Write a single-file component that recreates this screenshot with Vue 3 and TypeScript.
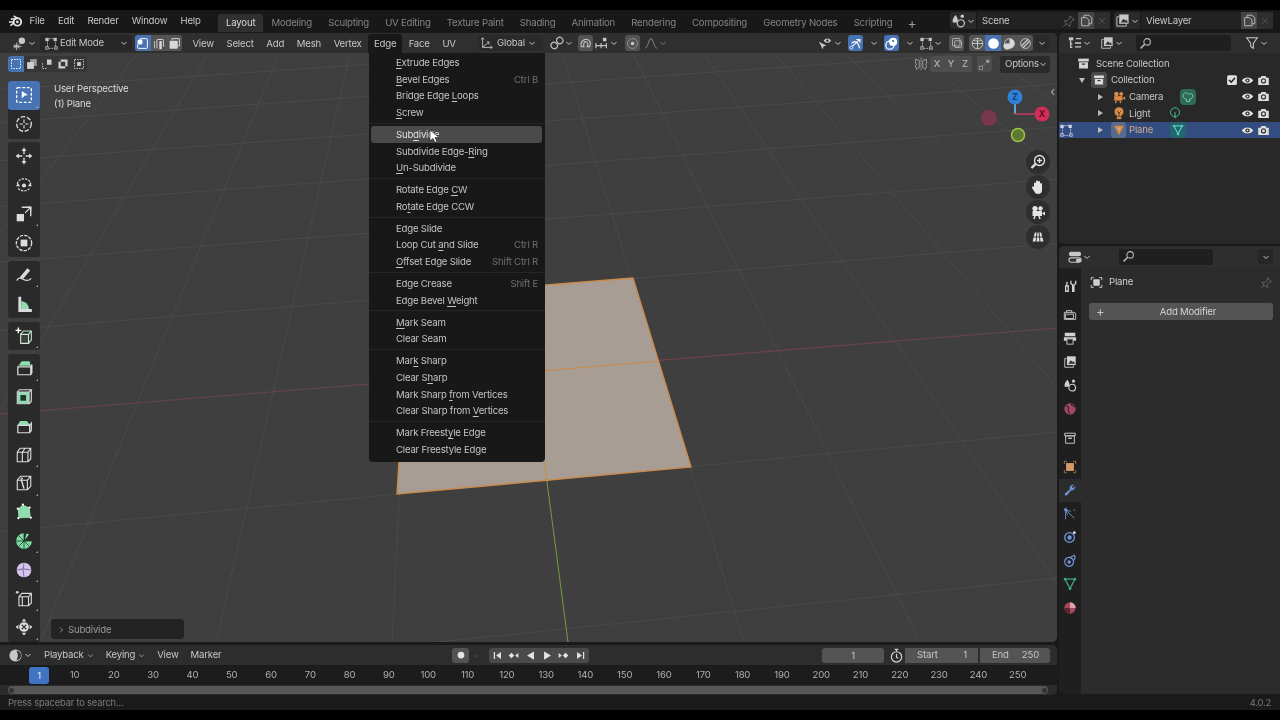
<script setup lang="ts">
import { h } from "vue";

// all icons live on a 16x16 grid
const icons: Record<string, string> = {
  blender: '<circle cx="10" cy="9.5" r="4" stroke-width="2"/><circle cx="10" cy="9.5" r="1.4" fill="currentColor" stroke="none"/><path d="M1 9.5h5M3 6.5h6M6 3l4 2.6M2.5 13.5l4-3" stroke-width="1.6"/>',
  chev: '<path d="M3 6l5 5 5-5" stroke-width="2"/>',
  view3d: '<path d="M1 11h9M5 7v8M2 9l6 4M8 9l-6 4"/><circle cx="10.5" cy="5" r="3.4" fill="currentColor" stroke="none"/>',
  editmode: '<path d="M3 4v8M5 14h7M13 6v6M5 2h5" stroke-dasharray="2 1"/><rect x="1" y="1.5" width="3" height="3" fill="currentColor"/><rect x="1" y="12" width="3" height="3"/><rect x="12" y="12" width="3" height="3"/><rect x="10.5" y="1" width="4" height="4" fill="currentColor" stroke="none"/>',
  selVert: '<path d="M5 2h8a1 1 0 0 1 1 1v10a1 1 0 0 1-1 1H3a1 1 0 0 1-1-1v-4" stroke-width="1.2"/><circle cx="5" cy="6" r="3.2" fill="currentColor" stroke="none"/>',
  selEdge: '<path d="M6 14V4a1 1 0 0 1 1-1h6a1 1 0 0 1 1 1v8" stroke-width="1.2"/><rect x="9" y="5" width="3" height="10" fill="currentColor" stroke="none"/><path d="M3 14V5"/>',
  selFace: '<path d="M5 4V2h9v9h-2" stroke-width="1.2"/><rect x="2" y="4.5" width="10" height="10" rx="1" fill="currentColor" stroke="none"/>',
  boxSet: '<rect x="2" y="2" width="12" height="12" stroke-dasharray="2 1.5" stroke-width="1.2"/>',
  boxAdd: '<rect x="5.5" y="1.5" width="9" height="9" fill="#999" stroke="none"/><rect x="1.5" y="5.5" width="9" height="9" fill="currentColor" stroke="none"/>',
  boxSub: '<rect x="8" y="2" width="6" height="7" fill="currentColor" stroke="none"/><path d="M2 7v7h7" stroke-dasharray="2 1.5" stroke-width="1.2"/>',
  boxDiff: '<path d="M5 2h9v9H11V5H5zM2 5h3v6h6v3H2z" fill="currentColor" stroke="none"/>',
  boxAnd: '<rect x="5.5" y="5.5" width="5" height="5" fill="currentColor" stroke="none"/><rect x="2" y="2" width="12" height="12" stroke-dasharray="2 1.5" stroke-width="1.2"/>',
  orient: '<path d="M3 2v11h11M3 13l7-6"/><path d="M1.5 4L3 2l1.5 2M12 11.5l2 1.5-2 1.5M8 6.5l2.5.5-.5 2.5"/>',
  link: '<rect x="1.5" y="7" width="7" height="7.5" rx="3.5" transform="rotate(-40 5 11)" stroke-width="1.3"/><rect x="7.5" y="1.5" width="7" height="7.5" rx="3.5" transform="rotate(-40 11 5)" stroke-width="1.3"/>',
  magnet: '<path d="M3 12C1 6 6 2 10 3s5 5 3 9h-3c2-3 1-5-1-6S5 7 6 12z" stroke-width="1.3"/>',
  snap: '<path d="M1 8v6M7 8v6M13 8v6M1 11h12" stroke-width="1.3"/><rect x="9" y="2" width="4" height="4" fill="currentColor" stroke="none"/>',
  prop: '<circle cx="8" cy="8" r="6" stroke-dasharray="2 1"/><circle cx="8" cy="8" r="2.2" fill="currentColor" stroke="none"/>',
  falloff: '<path d="M1 14c4 0 4-11 7-11s3 11 7 11" stroke-width="1.2"/>',
  visible: '<path d="M6 5c2-3 6-3 8 0-2 3-6 3-8 0z" fill="currentColor" stroke="none"/><circle cx="10" cy="5" r="1.2" fill="#222" stroke="none"/><path d="M1 6l4 8 1-3 3-1z" fill="currentColor" stroke="none"/>',
  gizmo: '<circle cx="3" cy="13" r="1.8"/><path d="M4 11.5L13 3M9 3h4.5v4.5M3 8c4-5 9-1 10 6" stroke-width="1.3"/>',
  overlay: '<circle cx="6" cy="10" r="5" stroke-width="1.5"/><circle cx="10" cy="6" r="5" fill="currentColor" stroke="none"/><circle cx="10" cy="5" r="1.4" fill="#4772b3" stroke="none"/>',
  xray: '<rect x="2" y="2" width="10" height="10" rx="1"/><rect x="5" y="5" width="9" height="9" rx="1"/>',
  wire: '<circle cx="8" cy="8" r="6.5"/><path d="M1.5 8h13M8 1.5v13M3 4c3 1.5 7 1.5 10 0"/>',
  solid: '<circle cx="8" cy="8" r="6.5" fill="currentColor" stroke="none"/>',
  material: '<circle cx="8" cy="8" r="6"/><path d="M8 2a6 6 0 0 1 0 12 4 4 0 0 1-6-6h6z" fill="currentColor" stroke="none"/>',
  render: '<circle cx="8" cy="8" r="6"/><path d="M3 11L11 3M5 13l8-8" stroke-width="1.5"/>',
  mirror: '<path d="M8 1v14" stroke-dasharray="2 1"/><path d="M6 4L2 2.5 1.5 7 3 8l-1.5 2L3 14l3-2zM10 4l4-1.5.5 4.5L13 8l1.5 2-1.5 4-3-2z"/>',
  merge: '<rect x="1.5" y="10" width="4" height="4"/><rect x="10" y="2" width="4" height="4" fill="currentColor" stroke="none"/><path d="M5 10l5-4" stroke-dasharray="2 1"/>',
  tree: '<rect x="1" y="1.5" width="5" height="3.5" fill="currentColor" stroke="none"/><path d="M3 5v8h2M3 9h2M8 8h7M8 12.5h7M9 3h6" stroke-width="1.5"/>',
  layer: '<rect x="4.5" y="1.5" width="10" height="10" fill="currentColor" stroke="none"/><path d="M6 10l3-4 2 2 1-1 2 3z" fill="#333" stroke="none"/><path d="M4 4H2v10h10v-2"/>',
  search: '<circle cx="10" cy="6" r="4" stroke-width="1.3"/><path d="M7 9l-5 5" stroke-width="1.8"/>',
  filter: '<path d="M2 2h12L9.5 8.5V14l-3-2V8.5z" stroke-width="1.2"/>',
  scene: '<path d="M5 2c2 3 3 5 1.5 8H2C1 7 3 4 5 2z" fill="currentColor" stroke="none"/><circle cx="12" cy="3.5" r="1.8" fill="currentColor" stroke="none"/><circle cx="10.5" cy="11" r="3.8" stroke-width="1.3"/>',
  pin: '<path d="M9 2l5 5-2 .5-3 3 .5 3L8 14 2.5 8.5 3 7.5l3 .5 3-3zM5 11l-3.5 3.5" stroke-width="1.1"/>',
  copy: '<path d="M5 4V1.5h6l3.5 3V12H11" stroke-width="1.2"/><path d="M2 4.5h6l3 3v7H2z" stroke-width="1.2"/>',
  close: '<path d="M3.5 3.5l9 9M12.5 3.5l-9 9" stroke-width="1.2"/>',
  box: '<rect x="1.5" y="2" width="13" height="3.5" fill="currentColor" stroke="none"/><path d="M2.5 6.5h11V14h-11z" fill="currentColor" stroke="none"/><rect x="6" y="8" width="4" height="1.5" fill="#333" stroke="none"/>',
  camera: '<circle cx="5" cy="4.5" r="2.6" fill="currentColor" stroke="none"/><circle cx="10.5" cy="4.5" r="2.2" fill="currentColor" stroke="none"/><rect x="2.5" y="7" width="9.5" height="5" fill="currentColor" stroke="none"/><path d="M12 9.5l3-2v4z" fill="currentColor" stroke="none"/><path d="M5 12l-1 3M9 12l1 3" stroke-width="1.5"/>',
  light: '<circle cx="8" cy="6.5" r="5.2" fill="currentColor" stroke="none"/><rect x="5.5" y="12" width="5" height="3" fill="currentColor" stroke="none"/><path d="M6 6l2 2 2-2M8 8v4" stroke="#333"/>',
  tri: '<path d="M2.5 3h11L8 14z" fill="currentColor" stroke="none"/><path d="M6 5h4L8 10z" fill="#b9a79b" stroke="none"/>',
  camData: '<path d="M2 4c3-3 5-1 6 0s5-2 6 1-1 6-4 6v3H6v-3C3 11 0 7 2 4z" stroke-width="1.2"/>',
  bulb: '<circle cx="8" cy="7" r="6" stroke-width="1.3"/><path d="M8 7v8" stroke-width="1.5"/>',
  meshData: '<path d="M2.5 2.5h11L8 13.5z" stroke-width="1.5"/><circle cx="2.5" cy="2.5" r="1.6" fill="currentColor" stroke="none"/><circle cx="13.5" cy="2.5" r="1.6" fill="currentColor" stroke="none"/><circle cx="8" cy="13.5" r="1.6" fill="currentColor" stroke="none"/>',
  eye: '<path d="M1 8c3-5 11-5 14 0-3 5-11 5-14 0z" fill="currentColor" stroke="none"/><circle cx="8" cy="8" r="2.6" fill="#222" stroke="none"/><circle cx="8" cy="8" r="1.2" fill="currentColor" stroke="none"/>',
  snapshot: '<path d="M1.5 4.5h3l1-2h5l1 2h3v9h-13z" fill="currentColor" stroke="none"/><circle cx="8" cy="8.5" r="3.2" fill="#333" stroke="none"/><circle cx="8" cy="8.5" r="1.8" fill="currentColor" stroke="none"/>',
  check: '<rect x="1.5" y="1.5" width="13" height="13" rx="2" fill="currentColor" stroke="none"/><path d="M4 8l3 3 5-6" stroke="#222" stroke-width="2"/>',
  select: '<rect x="1.5" y="1.5" width="13" height="13" rx="1" stroke-dasharray="2.5 1.5" stroke-width="1.2"/><path d="M6 4.5l5.5 3.5-3 .7L6 11z" fill="currentColor" stroke="none"/>',
  cursor: '<circle cx="8" cy="8" r="6.5" stroke-dasharray="4 1.5" stroke-width="1.2"/><path d="M8 4v3M8 9v3M4 8h3M9 8h3"/>',
  move: '<path d="M8 3.5v3M8 9.5v3M3.5 8h3M9.5 8h3" stroke-width="1.2"/><path d="M8 .5l2.2 3H5.8zM8 15.5l-2.2-3h4.4zM.5 8l3-2.2v4.4zM15.5 8l-3 2.2V5.8z" fill="currentColor" stroke="none"/>',
  rotate: '<path d="M2 7c1-6 11-6 12 0M3 11c2 3 8 3 10 0" stroke-dasharray="2 1"/><circle cx="8" cy="8.5" r="1.8" fill="currentColor" stroke="none"/><path d="M1 9l1.5-3L4.5 9zM11.5 9l2-3L15 9z" fill="currentColor" stroke="none"/>',
  scale: '<path d="M6 2h8v8" stroke-width="1.2"/><rect x="1.5" y="8" width="6.5" height="6.5" fill="currentColor" stroke="none"/><path d="M9 7l5-5M10.5 2H14v3.5"/>',
  transform: '<circle cx="8" cy="8" r="6.8" stroke-dasharray="3 1" stroke-width="1.2"/><rect x="5" y="5" width="6" height="6" fill="currentColor" stroke="none"/>',
  annotate: '<path d="M1.5 13c2-4 4-2 6-1s5 1 7-1" stroke-width="1"/><path d="M5 9l6-7 2.5 2-6 7-3 .5z" fill="currentColor" stroke="none"/>',
  measure: '<path d="M5.5 5.5a7 7 0 0 1 7 7h-7z" fill="#8fdcae" stroke="none"/><path d="M3 1.5h2.5V12.5H15V15H3z" fill="currentColor" stroke="none"/>',
  addCube: '<path d="M5 6.5h7v8H5z" fill="#33443a"/><path d="M5 6.5l2.5-3h7v8l-2.5 3M12 6.5l2.5-3" stroke="#b8e6cc"/><path d="M3 .5v5M.5 3h5" stroke-width="1.3" stroke="#fff"/>',
  extrude: '<path d="M3 6l3-4h7l1 4z" fill="#8fdcae" stroke="none"/><path d="M2.5 7h11.5v7H2.5zM14 7l1-2v7l-1 2" stroke-width="1.1"/>',
  inset: '<path d="M2 3.5h10.5V14H2z" fill="#8fdcae" stroke="#ccc"/><rect x="4.8" y="6.3" width="5" height="5" fill="#1c3528" stroke="none"/><path d="M12.5 3.5l2-2H4l-2 2M12.5 14l2-2V1.5"/>',
  bevel: '<path d="M2.5 7l2-3.5h6L13.5 7z" fill="#8fdcae" stroke="none"/><path d="M2.5 7.5h10.5V14H2.5zM13 7.5l1.5-2V12L13 14" stroke-width="1.1"/>',
  loop: '<path d="M2 5.5L4.5 2H14v9.5L11.5 14H2zM6.5 5.5L9 2M6.5 5.5V14M11.5 5.5L14 2M2 5.5h9.5V14"/>',
  knife: '<path d="M2 5.5L5 2h9v9l-3 3H2zM2 5.5h9V14M11 5.5L14 2"/><path d="M5.5 5l2.5 8" stroke-width="1.3"/><circle cx="6" cy="4" r="1" fill="currentColor" stroke="none"/>',
  polybuild: '<path d="M2.5 5L7 1.5 13 4l1 9-11 .5z" fill="#8fdcae" stroke="none"/><circle cx="2.5" cy="5" r="1" fill="#fff" stroke="none"/><circle cx="7" cy="1.5" r="1" fill="#fff" stroke="none"/><circle cx="13" cy="4" r="1" fill="#fff" stroke="none"/><circle cx="14" cy="13" r="1" fill="#fff" stroke="none"/><circle cx="3" cy="13.5" r="1" fill="#fff" stroke="none"/>',
  spin: '<path d="M8 8V1A7 7 0 1 0 15 8z" fill="#7fdca2" stroke="none"/><path d="M8.8 7L10 1.3a7 7 0 0 1 2.5 1z" fill="#7fdca2" stroke="none"/><path d="M8 1v14M1 8h14M3 3l5 5M3 13l5-5M13 13L8 8" stroke="#1c3528" stroke-width=".7"/>',
  smooth: '<circle cx="8" cy="8" r="6.5" fill="#d6c4ee" stroke="none"/><path d="M1.5 8c4-1 9-1 13 0M8 1.5c-1 4-1 9 0 13" stroke="#8a78a8"/>',
  shear: '<path d="M3.5 6L6 3h8.5v8.5L12 14H3.5zM3.5 6H12v8M12 6l2.5-3M6.5 6v8"/><circle cx="2" cy="2" r="1.2" fill="currentColor" stroke="none"/>',
  shrink: '<path d="M8 .5l2 2.5H6zM8 15.5L6 13h4zM.5 8L3 6v4zM15.5 8L13 10V6z" fill="currentColor" stroke="none"/><circle cx="8" cy="8" r="4.3" fill="currentColor" stroke="none"/><path d="M6 6l4 4M10 6l-4 4" stroke="#333"/>',
  zoom: '<circle cx="9.5" cy="6.5" r="5" stroke-width="1.3"/><path d="M5.5 10L1.5 14" stroke-width="2.4"/><path d="M7 6.5h5M9.5 4v5" stroke-width="1.3"/>',
  hand: '<path d="M4 8V4.5a1 1 0 0 1 2 0V8 2.5a1 1 0 0 1 2 0V8 3a1 1 0 0 1 2 0v5.5V5a1 1 0 0 1 2 0v6c0 3-2 4-4 4s-3-1-4-3L2 9c-.5-1 1-2 2-1z" fill="currentColor" stroke="none"/>',
  persp: '<path d="M4.5 3h7L14 13H2zM3.3 8h9.4M7 3l-1 10M9 3l1 10" fill="currentColor" stroke="#333"/>',
  timeline: '<circle cx="8" cy="8" r="6.5" fill="currentColor" stroke="none"/><path d="M9 3a5 5 0 0 1 0 10c2-3 2-7 0-10z" fill="#333" stroke="none"/>',
  record: '<circle cx="8" cy="8" r="4.5" fill="currentColor" stroke="none"/>',
  jumpStart: '<path d="M3.5 3v10" stroke-width="1.8"/><path d="M13 3L6 8l7 5z" fill="currentColor" stroke="none"/>',
  keyPrev: '<path d="M5 4l4 4-4 4-4-4z" fill="currentColor" stroke="none"/><path d="M15 4.5L10.5 8l4.5 3.5z" fill="currentColor" stroke="none"/>',
  playBack: '<path d="M13 2L3 8l10 6z" fill="currentColor" stroke="none"/>',
  play: '<path d="M3 2l10 6-10 6z" fill="currentColor" stroke="none"/>',
  keyNext: '<path d="M11 4L7 8l4 4 4-4z" fill="currentColor" stroke="none"/><path d="M1 4.5L5.5 8 1 11.5z" fill="currentColor" stroke="none"/>',
  jumpEnd: '<path d="M12.5 3v10" stroke-width="1.8"/><path d="M3 3l7 5-7 5z" fill="currentColor" stroke="none"/>',
  clock: '<circle cx="8" cy="9.5" r="5.5" stroke-width="1.3"/><path d="M8 6v4l2 1M6 1.5h4M8 1.5V4" stroke-width="1.2"/>',
  toggles: '<rect x="1" y="2" width="14" height="5" rx="2.5" fill="currentColor" stroke="none"/><rect x="1" y="9" width="14" height="5" rx="2.5" stroke-width="1.2"/><rect x="9" y="10" width="6" height="4" rx="2" fill="currentColor" stroke="none"/>',
  objectData: '<path d="M1.5 5V2h3M11.5 2h3v3M1.5 11v3h3M11.5 14h3v-3" stroke-width="1.2"/><rect x="4" y="4" width="8" height="8" rx="1" fill="currentColor" stroke="none"/>',
  tool: '<path d="M3 8h3v6H3zM4.5 3v4" stroke-width="1.5"/><path d="M9 2v3l2 2v7h1.5V7l2-2V2" stroke-width="1.5"/>',
  pRender: '<path d="M1.5 5h11l2 1v7h-13zM4 5V3h6v2"/><rect x="3" y="7" width="9" height="5"/>',
  pOutput: '<path d="M2 2h12v4H2z" fill="currentColor" stroke="none"/><path d="M1 7h14v4H1z" fill="currentColor" stroke="none"/><rect x="4.5" y="9" width="7" height="6" fill="#1f1f1f" stroke="currentColor"/>',
  pWorld: '<circle cx="8" cy="8" r="6.5" fill="#a04a62" stroke="none"/><path d="M3 5c3-1 4 1 3 3s2 3 1 6M9 2c1 3 4 2 5 4" stroke="#3a2028" stroke-width="1.2"/>',
  pCollection: '<path d="M2 2.5h12v3H2zM3 5.5h10V14H3z"/><rect x="6" y="7.5" width="4" height="1.5" fill="currentColor" stroke="none"/>',
  pObject: '<path d="M1.5 4.5v-3h3M11.5 1.5h3v3M1.5 11.5v3h3M11.5 14.5h3v-3" stroke="#b07840"/><rect x="3.5" y="3.5" width="9" height="9" fill="#d29a68" stroke="none"/>',
  wrench: '<path d="M2 13c0-2 4-4 6-6-1-3 1-5 4.5-5L10 4.5 11.5 6 14 3.500c.5 3-2 5.5-5 5-2 2-4 6-6 6z" fill="currentColor" stroke="none"/>',
  pParticle: '<circle cx="3" cy="3" r="1.8" fill="currentColor" stroke="none"/><path d="M3 3v11M3 3l10 10M3 3l6 2M3 3l2 6M12 3.5h2"/>',
  pPhysics: '<circle cx="7.5" cy="8.5" r="5.5" stroke-width="1.5"/><circle cx="7.5" cy="8.5" r="2.5" fill="currentColor" stroke="none"/><circle cx="13" cy="3" r="1.6" fill="#ddd" stroke="none"/>',
  pConstraint: '<ellipse cx="7" cy="9" rx="5" ry="5" stroke-width="1.5" transform="rotate(30 7 9)"/><circle cx="7" cy="9" r="2" fill="currentColor" stroke="none"/><path d="M8 4l5-2.5c1.5 2 0 5-1.5 6.5" stroke-width="1.4"/>',
  pMaterial: '<circle cx="8" cy="8" r="6.5" fill="#a8485c" stroke="none"/><path d="M8 1.5a6.5 6.5 0 0 1 6.5 6.5H8z" fill="#e0a0a8" stroke="none"/><path d="M8 8H1.5A6.5 6.5 0 0 0 8 14.5z" fill="#5c2430" stroke="none"/>',
};

const Ico = (props: { n: string; s?: number }) =>
  h("svg", {
    viewBox: "0 0 16 16",
    width: props.s ?? 14,
    height: props.s ?? 14,
    class: "ic",
    innerHTML: icons[props.n],
  });

const fileMenus = ["File", "Edit", "Render", "Window", "Help"];
const workspaces = ["Layout", "Modeling", "Sculpting", "UV Editing", "Texture Paint", "Shading", "Animation", "Rendering", "Compositing", "Geometry Nodes", "Scripting"];
const viewMenus = ["View", "Select", "Add", "Mesh", "Vertex", "Edge", "Face", "UV"];

// text is split around the mnemonic letter: [before, letter, after, shortcut]
type Item = [string, string, string, string?];
const menuGroups: Item[][] = [
  [["", "E", "xtrude Edges"], ["", "B", "evel Edges", "Ctrl B"], ["Bridge Edge ", "L", "oops"], ["", "S", "crew"]],
  [["Sub", "d", "ivide"], ["Subdivide Edge-", "R", "ing"], ["", "U", "n-Subdivide"]],
  [["Rotate Edge ", "C", "W"], ["Ro", "t", "ate Edge CCW"]],
  [["Edge Slide", "", ""], ["Loop Cut ", "a", "nd Slide", "Ctrl R"], ["", "O", "ffset Edge Slide", "Shift Ctrl R"]],
  [["Edge Crease", "", "", "Shift E"], ["Edge Bevel ", "W", "eight"]],
  [["", "M", "ark Seam"], ["Clear Seam", "", ""]],
  [["Mar", "k", " Sharp"], ["Clear S", "h", "arp"], ["Mark Sharp ", "f", "rom Vertices"], ["Clear Sharp from ", "V", "ertices"]],
  [["Mark Freest", "y", "le Edge"], ["Clear Freestyle Edge", "", ""]],
];

const selectOps = ["boxSet", "boxAdd", "boxSub", "boxDiff", "boxAnd"];
const toolGroups: string[][] = [
  ["select", "cursor"],
  ["move", "rotate", "scale", "transform"],
  ["annotate", "measure"],
  ["addCube"],
  ["extrude", "inset", "bevel", "loop", "knife", "polybuild", "spin", "smooth", "shear", "shrink"],
];
const cornerMark = new Set(["select", "scale", "annotate", "addCube", "extrude", "loop", "knife", "spin", "smooth", "shear", "shrink"]);

const navIcons = ["zoom", "hand", "camera", "persp"];
const propTabs = ["tool", "pRender", "pOutput", "layer", "scene", "pWorld", "pCollection", "pObject", "wrench", "pParticle", "pPhysics", "pConstraint", "meshData", "pMaterial"];
const tabGapBefore = new Set(["pRender", "pCollection", "pObject"]);
const tabColor: Record<string, string> = { wrench: "blue", pParticle: "blue", pPhysics: "blue", pConstraint: "blue", meshData: "green" };

const outliner = [
  { name: "Camera", icon: "camera", badge: "camData", badgeBox: "b-cam" },
  { name: "Light", icon: "light", badge: "bulb", badgeBox: "b-light" },
  { name: "Plane", icon: "tri", badge: "meshData", badgeBox: "b-mesh" },
];

const frames = Array.from({ length: 25 }, (_, i) => (i + 1) * 10);

// viewport floor, worked out from the plane corners (screen coordinates)
const VP = { x: 440, y: -343 };
const depthLines = Array.from({ length: 40 }, (_, i) => {
  const x0 = 547 + (i - 18) * 147;
  return { x1: VP.x, y1: VP.y, x2: VP.x + (x0 - VP.x) * (985 / 823), y2: 642 };
});
const crossLines = [-1, 0, 2, 3, 4, 5, 6, 7].map((n) => {
  const y = 1 / (0.001215 + n * 0.000188) - 343;
  const slope = 0.0875 + (y - 370) * 0.00006;
  return { y1: y + 547 * slope, y2: y - 510 * slope };
});
</script>

<template>
  <div class="app">
    <header class="topbar">
      <Ico n="blender" :s="15" class="logo" />
      <nav class="filemenu">
        <span v-for="m in fileMenus" :key="m">{{ m }}</span>
      </nav>
      <nav class="tabs">
        <span v-for="(w, i) in workspaces" :key="w" class="tab" :class="{ on: i === 0 }">{{ w }}</span>
        <span class="plus">+</span>
      </nav>
      <div class="scene-group">
        <div class="picker"><Ico n="scene" :s="15" /><Ico n="chev" :s="8" /></div>
        <div class="name-field scene-field">
          <span>Scene</span>
          <Ico n="pin" :s="14" class="pin" />
        </div>
        <div class="mini lit"><Ico n="copy" :s="13" /></div>
        <div class="mini"><Ico n="close" :s="10" /></div>
      </div>
      <div class="scene-group layer-group">
        <div class="picker"><Ico n="layer" :s="15" /><Ico n="chev" :s="8" /></div>
        <div class="name-field layer-field"><span>ViewLayer</span></div>
        <div class="mini lit"><Ico n="copy" :s="13" /></div>
        <div class="mini"><Ico n="close" :s="10" /></div>
      </div>
    </header>

    <main class="workspace">
      <div class="left-col">
        <section class="viewport">
          <svg class="scene3d" viewBox="0 33 1057 609" width="1057" height="609">
            <line v-for="(l, i) in depthLines" :key="'d' + i" v-bind="l" class="grid" />
            <line v-for="(l, i) in crossLines" :key="'c' + i" x1="0" :y1="l.y1" x2="1057" :y2="l.y2" class="grid" />
            <line x1="0" y1="414" x2="1057" y2="328" class="axis-x" />
            <line x1="568" y1="642" x2="547" y2="482" class="axis-y" />
            <polygon points="633,278 691,467 397,494 409,296" class="face" />
            <polyline points="633,278 691,467 397,494 409,296 633,278" class="edge" />
            <line x1="658" y1="361" x2="404" y2="383" class="edge thin" />
            <line x1="547" y1="482" x2="520" y2="287" class="edge thin" />
            <!-- orientation gizmo -->
            <line x1="1015" y1="97" x2="1015" y2="114" class="gz-z" />
            <line x1="1015" y1="114" x2="1042" y2="114" class="gz-x" />
            <circle cx="989" cy="118" r="7" class="gz-nx" />
            <circle cx="1018" cy="135" r="6.5" class="gz-ny" />
            <circle cx="1015" cy="97" r="7.5" fill="#2f80d8" />
            <circle cx="1042" cy="114" r="7.5" fill="#d12f58" />
            <text x="1015" y="100" class="gz-t blue-t">Z</text>
            <text x="1042" y="117" class="gz-t red-t">X</text>
          </svg>

          <div class="vp-header">
            <div class="picker vp-type"><Ico n="view3d" :s="15" /><Ico n="chev" :s="8" /></div>
            <div class="mode"><Ico n="editmode" :s="13" /><span>Edit Mode</span><Ico n="chev" :s="8" class="push" /></div>
            <div class="seg modes">
              <span class="on"><Ico n="selVert" :s="13" /></span>
              <span><Ico n="selEdge" :s="13" /></span>
              <span><Ico n="selFace" :s="13" /></span>
            </div>
            <nav class="viewmenu">
              <span v-for="m in viewMenus" :key="m" :class="{ open: m === 'Edge' }">{{ m }}</span>
            </nav>
            <div class="orient"><Ico n="orient" :s="14" /><span>Global</span><Ico n="chev" :s="8" class="push" /></div>
            <div class="picker pivot"><Ico n="link" :s="14" /><Ico n="chev" :s="8" /></div>
            <span class="tbtn snapbtn"><Ico n="magnet" :s="13" /></span>
            <div class="picker snapper"><Ico n="snap" :s="14" /><Ico n="chev" :s="8" /></div>
            <span class="tbtn propbtn"><Ico n="prop" :s="13" /></span>
            <div class="picker dim falloff"><Ico n="falloff" :s="14" /><Ico n="chev" :s="8" /></div>

            <div class="hd-right">
              <div class="picker vis"><Ico n="visible" :s="15" /><Ico n="chev" :s="8" /></div>
              <span class="tbtn blue-btn gizmo"><Ico n="gizmo" :s="13" /></span>
              <Ico n="chev" :s="8" class="solo" />
              <span class="tbtn blue-btn over"><Ico n="overlay" :s="13" /></span>
              <Ico n="chev" :s="8" class="solo" />
              <div class="picker edit-ov"><Ico n="editmode" :s="13" /><Ico n="chev" :s="8" /></div>
              <span class="tbtn xray"><Ico n="xray" :s="12" /></span>
              <div class="seg shade">
                <span><Ico n="wire" :s="13" /></span>
                <span class="on"><Ico n="solid" :s="13" /></span>
                <span><Ico n="material" :s="13" /></span>
                <span><Ico n="render" :s="13" /></span>
              </div>
              <span class="shade-more"><Ico n="chev" :s="8" /></span>
            </div>
          </div>

          <div class="tool-row">
            <div class="seg sel-modes">
              <span v-for="(op, i) in selectOps" :key="op" :class="{ on: i === 0 }"><Ico :n="op" :s="12" /></span>
            </div>
            <div class="tool-right">
              <Ico n="mirror" :s="14" class="mirror" />
              <div class="axis-chips"><span>X</span><span>Y</span><span>Z</span></div>
              <span class="tbtn merge"><Ico n="merge" :s="13" /></span>
              <div class="options"><span>Options</span><Ico n="chev" :s="8" /></div>
            </div>
          </div>

          <div class="vp-body">
            <aside class="toolbar">
              <div v-for="(g, gi) in toolGroups" :key="gi" class="tool-group" :class="{ grow: gi === 4 }">
                <div v-for="t in g" :key="t" class="tool" :class="{ on: t === 'select' }">
                  <Ico :n="t" :s="18" />
                  <i v-if="cornerMark.has(t)" class="corner"></i>
                </div>
              </div>
            </aside>
            <div class="vp-info">
              <div class="vp-text">User Perspective<br />(1) Plane</div>
              <div class="redo"><Ico n="chev" :s="8" class="redo-chev" /><span>Subdivide</span></div>
            </div>
          </div>

          <div class="nav-btns">
            <span v-for="n in navIcons" :key="n" class="nav-btn"><Ico :n="n" :s="16" /></span>
          </div>
          <span class="side-arrow">‹</span>

          <div class="edge-menu">
            <template v-for="(g, gi) in menuGroups" :key="gi">
              <div v-if="gi > 0" class="sep"></div>
              <div v-for="it in g" :key="it[0] + it[1]" class="item" :class="{ hot: it[0] === 'Sub' }">
                <span>{{ it[0] }}<u>{{ it[1] }}</u>{{ it[2] }}</span>
                <span v-if="it[3]" class="short">{{ it[3] }}</span>
              </div>
            </template>
          </div>
          <svg class="pointer" width="11" height="15" viewBox="0 0 11 15">
            <path d="M1 1v11l3-2.5 2 4 2-1-2-4h4z" fill="#fff" stroke="#222" stroke-width=".7" />
          </svg>
        </section>

        <section class="timeline">
          <div class="tl-header">
            <div class="picker tl-type"><Ico n="timeline" :s="15" /><Ico n="chev" :s="8" /></div>
            <div class="tl-menus">
              <span>Playback<Ico n="chev" :s="7" class="m-chev" /></span>
              <span>Keying<Ico n="chev" :s="7" class="m-chev" /></span>
              <span>View</span>
              <span>Marker</span>
            </div>
            <span class="tbtn rec"><Ico n="record" :s="12" /></span>
            <Ico n="chev" :s="7" class="rec-chev" />
            <div class="transport">
              <Ico n="jumpStart" :s="11" />
              <Ico n="keyPrev" :s="11" />
              <Ico n="playBack" :s="11" />
              <Ico n="play" :s="11" />
              <Ico n="keyNext" :s="11" />
              <Ico n="jumpEnd" :s="11" />
            </div>
            <div class="frame-box">1</div>
            <Ico n="clock" :s="15" class="clock" />
            <div class="range r-start"><span>Start</span><span>1</span></div>
            <div class="range r-end"><span>End</span><span>250</span></div>
          </div>
          <div class="tl-scale">
            <span class="cur-frame">1</span>
            <span v-for="f in frames" :key="f" class="fr">{{ f }}</span>
          </div>
          <div class="tl-scroll"><div class="thumb"><i></i><i></i></div></div>
        </section>
      </div>

      <div class="right-col">
        <section class="outliner">
          <div class="out-header">
            <div class="picker"><Ico n="tree" :s="14" /><Ico n="chev" :s="8" /></div>
            <div class="picker out-mode"><Ico n="layer" :s="14" /><Ico n="chev" :s="8" /></div>
            <div class="searchbox"><Ico n="search" :s="13" /></div>
            <div class="picker out-filter"><Ico n="filter" :s="14" /><Ico n="chev" :s="8" /></div>
          </div>
          <div class="row lvl0">
            <Ico n="box" :s="13" class="r-ico" />
            <span>Scene Collection</span>
          </div>
          <div class="row lvl1">
            <i class="tri-down"></i>
            <span class="coll-ico"><Ico n="box" :s="12" /></span>
            <span>Collection</span>
            <span class="row-end"><Ico n="check" :s="12" /><Ico n="eye" :s="13" /><Ico n="snapshot" :s="13" /></span>
          </div>
          <div v-for="o in outliner" :key="o.name" class="row lvl2" :class="{ sel: o.name === 'Plane' }">
            <Ico v-if="o.name === 'Plane'" n="editmode" :s="13" class="row-mode" />
            <i class="tri-right"></i>
            <span class="obj-ico" :class="{ boxed: o.name === 'Plane' }"><Ico :n="o.icon" :s="14" /></span>
            <span class="obj-name">{{ o.name }}</span>
            <span class="badge" :class="o.badgeBox"><Ico :n="o.badge" :s="12" /></span>
            <span class="row-end"><Ico n="eye" :s="13" /><Ico n="snapshot" :s="13" /></span>
          </div>
        </section>

        <section class="properties">
          <div class="pr-header">
            <div class="picker"><Ico n="toggles" :s="14" /><Ico n="chev" :s="8" /></div>
            <div class="searchbox pr-search"><Ico n="search" :s="13" /></div>
            <span class="pr-more"><Ico n="chev" :s="8" /></span>
          </div>
          <div class="pr-body">
            <nav class="pr-tabs">
              <span
                v-for="t in propTabs"
                :key="t"
                class="pr-tab"
                :class="[tabColor[t], { on: t === 'wrench', gap: tabGapBefore.has(t) }]"
              ><Ico :n="t" :s="14" /></span>
            </nav>
            <div class="pr-panel">
              <div class="pr-title">
                <Ico n="objectData" :s="13" />
                <span>Plane</span>
                <Ico n="pin" :s="13" class="push dim-ico" />
              </div>
              <button class="add-mod"><span class="add-plus">+</span><span class="add-label">Add Modifier</span></button>
            </div>
          </div>
        </section>
      </div>
    </main>

    <footer class="status">
      <span>Press spacebar to search...</span>
      <span>4.0.2</span>
    </footer>
  </div>
</template>

<style>
html, body { margin: 0; background: #000; }
.ic { fill: none; stroke: currentColor; stroke-width: 1; flex: none; display: block; }
</style>

<style scoped>
.app {
  width: 1280px;
  height: 720px;
  box-sizing: border-box;
  padding: 10px 0;
  background: #000;
  display: flex;
  flex-direction: column;
  font: 9.6px/1 Inter, "Liberation Sans", sans-serif;
  letter-spacing: -0.2px;
  white-space: nowrap;
  color: #c6c6c6;
  overflow: hidden;
  filter: blur(0.35px);
}

/* top bar */
.topbar { height: 22px; flex: none; background: #181818; display: flex; position: relative; align-items: flex-start; }
.logo { margin: 3px 0 0 8px; color: #e6e6e6; }
.filemenu { display: flex; padding-top: 5px; }
.filemenu span { padding: 0 6.6px; line-height: 11px; }
.tabs { display: flex; position: absolute; left: 218px; top: 4px; height: 18px; align-items: center; color: #858585; }
.tab { padding: 0 8.1px; height: 18px; line-height: 17px; border-radius: 3px 3px 0 0; }
.tab.on { background: #303030; color: #d8d8d8; }
.plus { margin-left: 7px; font-size: 14px; color: #999; }
.scene-group { position: absolute; left: 950px; top: 2px; height: 17px; display: flex; align-items: center; }
.layer-group { left: 1114px; }
.picker { display: flex; align-items: center; gap: 1px; color: #c8c8c8; }
.scene-group .picker { width: 26px; height: 17px; background: #2a2a2a; border-radius: 3px 0 0 3px; justify-content: center; }
.name-field { height: 17px; background: #222; display: flex; align-items: center; padding: 1px 0 0 5px; box-sizing: border-box; color: #c8c8c8; }
.scene-field { width: 101px; margin-left: 1px; position: relative; }
.layer-field { width: 100px; margin-left: 1px; }
.pin { margin-left: auto; margin-right: 2px; color: #666; }
.mini { width: 16px; height: 17px; display: flex; align-items: center; justify-content: center; background: #2e2e2e; color: #5c5c5c; }
.mini.lit { background: #454545; color: #b8b8b8; }

.workspace { flex: 1; min-height: 0; display: flex; background: #1a1a1a; padding-top: 1px; }
.left-col { width: 1057px; flex: none; display: flex; flex-direction: column; }
.right-col { flex: 1; margin-left: 2px; display: flex; flex-direction: column; }

/* viewport */
.viewport {
  height: 609px;
  flex: none;
  background: #3f3f3f;
  border-radius: 0 5px 5px 0;
  position: relative;
  overflow: hidden;
  display: flex;
  flex-direction: column;
}
.scene3d { position: absolute; left: 0; top: 0; }
.grid { stroke: #4a4a4a; stroke-width: 1; }
.axis-x { stroke: #6d434c; stroke-width: 1.2; }
.axis-y { stroke: #6e9a35; stroke-width: 1; }
.face { fill: #a89d95; }
.edge { fill: none; stroke: #c98a4c; stroke-width: 1.4; }
.edge.thin { stroke-width: 1.1; }
.gz-z { stroke: #5fa8d8; stroke-width: 2; }
.gz-x { stroke: #a03a55; stroke-width: 2; }
.gz-nx { fill: #74394a; stroke: #8a344b; stroke-width: 1.5; }
.gz-ny { fill: #5f7a34; stroke: #9ac444; stroke-width: 1.5; }
.gz-t { font-size: 9px; font-weight: 700; text-anchor: middle; }
.blue-t { fill: #123c78; }
.red-t { fill: #5a0c22; }

.vp-header { height: 20px; flex: none; background: #2f2f2f; position: relative; display: flex; align-items: center; }
.vp-type { width: 21px; margin-left: 12px; }
.mode { width: 92px; height: 16px; box-sizing: border-box; margin-left: 7px; background: #272727; border-radius: 3px; display: flex; align-items: center; padding: 0 4px 0 5px; gap: 2px; }
.push { margin-left: auto; }
.seg { display: flex; background: #535353; border-radius: 3px; overflow: hidden; color: #d8d8d8; }
.seg span { height: 16px; display: flex; align-items: center; justify-content: center; }
.seg .on { background: #4772b3; color: #fff; }
.modes { margin-left: 3px; }
.modes span { width: 15.7px; }
.viewmenu { display: flex; margin-left: 4px; height: 19px; width: 292px; align-items: center; }
.viewmenu span { padding: 0 6.35px; height: 19px; line-height: 19px; }
.viewmenu .open { background: #181818; border-radius: 3px 3px 0 0; padding: 0 6px; }
.orient { width: 65px; height: 16px; display: flex; align-items: center; gap: 3px; padding: 0 7px 0 2px; box-sizing: border-box; background: #2a2a2a; border-radius: 3px; }
.pivot { margin-left: 7px; width: 24px; }
.tbtn { width: 15px; height: 16px; display: flex; align-items: center; justify-content: center; background: #535353; border-radius: 3px; color: #c8c8c8; flex: none; }
.snapbtn { margin-left: 4px; }
.snapper { margin-left: 2px; width: 24px; }
.propbtn { margin-left: 6px; }
.dim { color: #777; }
.falloff { margin-left: 4px; }
.hd-right { margin-left: auto; padding-right: 8px; display: flex; align-items: center; }
.vis { width: 24px; }
.blue-btn { background: #4772b3; color: #fff; }
.gizmo { margin-left: 6px; }
.solo { margin: 0 6.5px; color: #c8c8c8; }
.edit-ov { width: 23px; }
.xray { margin-left: 6px; }
.shade { margin-left: 5px; }
.shade span { width: 16px; }
.shade-more { width: 14px; height: 16px; background: #2a2a2a; border-radius: 3px; display: flex; align-items: center; justify-content: center; margin-left: 2px; }

.tool-row { height: 22px; flex: none; position: relative; display: flex; align-items: center; justify-content: space-between; padding: 0 7px 0 8px; }
.sel-modes { background: #363636; color: #d0d0d0; }
.sel-modes span { width: 15.8px; }
.tool-right { display: flex; align-items: center; }
.mirror { color: #a8a8a8; margin-right: 2px; }
.axis-chips { display: flex; background: #4d4d4d; border-radius: 3px; height: 16px; align-items: center; color: #c0c0c0; }
.axis-chips span { width: 14px; text-align: center; }
.merge { margin-left: 5px; background: #4d4d4d; color: #999; }
.options { margin-left: 8px; width: 50px; height: 17px; box-sizing: border-box; padding: 0 5px; background: #2b2b2b; border-radius: 3px; display: flex; align-items: center; justify-content: space-between; }

.vp-body { flex: 1; min-height: 0; position: relative; display: flex; padding: 6px 0 0 8px; }
.toolbar { width: 32px; flex: none; display: flex; flex-direction: column; gap: 3.4px; }
.tool-group { background: #2a2a2a; border-radius: 3px; display: flex; flex-direction: column; }
.tool-group.grow { flex: 1; }
.tool { height: 28.8px; flex: none; display: flex; align-items: center; justify-content: center; position: relative; color: #dcdcdc; border-radius: 3px; }
.tool.on { background: #4772b3; color: #fff; }
.corner { position: absolute; right: 2px; bottom: 2px; border: 1.5px solid transparent; border-right-color: #aaa; border-bottom-color: #aaa; }
.vp-info { flex: 1; display: flex; flex-direction: column; justify-content: space-between; padding: 1px 0 3px 14px; position: relative; }
.vp-text { line-height: 14.5px; color: #dcdcdc; }
.redo { width: 133px; height: 20px; margin-left: -3px; box-sizing: border-box; background: #232323; border-radius: 4px; display: flex; align-items: center; padding: 1px 0 0 6px; color: #999; gap: 3px; }
.redo-chev { transform: rotate(-90deg); color: #888; }

.nav-btns { position: absolute; left: 1026px; top: 117px; display: flex; flex-direction: column; gap: 1px; }
.nav-btn { width: 24px; height: 24px; border-radius: 50%; background: #2e2e2e; display: flex; align-items: center; justify-content: center; color: #e4e4e4; }
.side-arrow { position: absolute; right: 2px; top: 52px; font-size: 13px; color: #aaa; }

.edge-menu {
  position: absolute;
  left: 369px;
  top: 20px;
  width: 176px;
  height: 409px;
  box-sizing: border-box;
  padding: 1px 3px 0 2px;
  background: #181818;
  border-radius: 0 0 4px 4px;
}
.item { height: 16.7px; padding: 1px 4px 0 25px; box-sizing: border-box; display: flex; justify-content: space-between; align-items: center; border-radius: 3px; color: #c4c4c4; }
.item.hot { background: #4a4a4a; color: #e0e0e0; }
.item u { text-underline-offset: 1.5px; }
.short { color: #6f6f6f; }
.sep { height: 5.2px; margin: 0 -3px 0 -2px; position: relative; }
.sep::after { content: ""; position: absolute; left: 0; right: 0; top: 2px; height: 1px; background: #262626; }
.pointer { position: absolute; left: 429px; top: 96px; }

/* timeline */
.timeline { flex: 1; margin-top: 3px; display: flex; flex-direction: column; border-radius: 0 5px 5px 0; overflow: hidden; background: #2b2b2b; }
.tl-header { height: 20px; flex: none; background: #2d2d2d; display: flex; align-items: center; }
.tl-type { width: 21px; margin-left: 8px; }
.tl-menus { display: flex; margin-left: 15px; width: 408px; gap: 12px; }
.tl-menus span { display: flex; align-items: center; gap: 3px; }
.m-chev { color: #aaa; }
.rec { width: 17px; height: 15px; background: #535353; color: #e4e4e4; }
.rec-chev { margin: 0 10px 0 3px; color: #555; }
.transport { width: 100px; height: 15px; border-radius: 3px; background: #4a4a4a; display: flex; align-items: center; justify-content: space-around; color: #e4e4e4; }
.frame-box { width: 62px; height: 15px; margin-left: 233px; background: #545454; border-radius: 3px; text-align: center; line-height: 15px; }
.clock { margin-left: 5px; color: #d0d0d0; }
.range { height: 15px; box-sizing: border-box; background: #545454; display: flex; align-items: center; justify-content: space-between; }
.r-start { width: 73px; margin-left: 1px; padding: 0 11px 0 12px; }
.r-end { width: 70px; margin-left: 2px; padding: 0 11px 0 12px; border-radius: 0 3px 3px 0; }

.tl-scale { height: 20px; flex: none; background: #1c1c1c; display: flex; align-items: center; color: #b0b0b0; }
.cur-frame { width: 20px; height: 17px; margin: 0 5.9px 0 29px; flex: none; background: #3f74c5; border-radius: 3px; color: #eaeaea; text-align: center; line-height: 17px; }
.fr { width: 39.3px; flex: none; text-align: center; }
.tl-scroll { flex: 1; background: #2b2b2b; padding: 1px 9px 1px 8px; }
.thumb { height: 8px; background: #565656; border-radius: 4px; display: flex; justify-content: space-between; align-items: center; padding: 0 1px; }
.thumb i { width: 5px; height: 5px; border-radius: 50%; background: #333; }

/* outliner */
.outliner { height: 211px; flex: none; background: #282828; border-radius: 5px 0 0 5px; overflow: hidden; position: relative; }
.out-header { height: 20px; background: #2e2e2e; display: flex; align-items: center; padding-left: 9px; }
.out-mode { margin-left: 9px; }
.searchbox { height: 16px; background: #1f1f1f; border-radius: 3px; display: flex; align-items: center; padding-left: 3px; color: #bbb; box-sizing: border-box; }
.out-header .searchbox { width: 95px; margin-left: 13px; }
.out-filter { margin-left: 14px; }
.row { height: 16.7px; display: flex; align-items: center; position: relative; }
.lvl0 { padding-left: 18px; margin-top: 2px; }
.r-ico { margin-right: 6px; color: #d6d6d6; }
.lvl1 { padding-left: 20px; }
.tri-down { border: 3px solid transparent; border-top: 5px solid #bbb; border-bottom: 0; margin-right: 6px; }
.coll-ico { width: 16px; height: 16px; background: #4a4a4a; border-radius: 3px; display: flex; align-items: center; justify-content: center; margin-right: 4px; color: #dcdcdc; }
.lvl2 { padding-left: 39px; }
.lvl2.sel { background: #334d80; }
.tri-right { border: 3px solid transparent; border-left: 5px solid #bbb; border-right: 0; margin-right: 8px; }
.obj-ico { width: 15px; display: flex; justify-content: center; margin-right: 3px; color: #d98b44; }
.obj-ico.boxed { background: #5a6a8c; border-radius: 3px; height: 16px; align-items: center; }
.sel .obj-name { color: #d0a98a; }
.row-mode { position: absolute; left: 1px; color: #cfd8ea; }
.badge { width: 16px; height: 16px; border-radius: 4px; display: flex; align-items: center; justify-content: center; margin-left: 17px; }
.b-cam { background: #2f6a55; color: #7fcfb0; }
.b-light { color: #3fbf8a; }
.b-mesh { background: #24646a; color: #4fd0c0; }
.row-end { position: absolute; right: 10px; display: flex; gap: 3px; align-items: center; color: #e0e0e0; }

/* properties */
.properties { flex: 1; margin-top: 2px; margin-bottom: 1px; background: #2c2c2c; border-radius: 5px 0 0 5px; overflow: hidden; display: flex; flex-direction: column; }
.pr-header { height: 21px; flex: none; display: flex; align-items: center; padding-left: 9px; background: #2e2e2e; }
.pr-search { width: 94px; margin-left: 28px; }
.pr-more { width: 15px; height: 15px; background: #262626; border-radius: 3px; margin-left: 45px; display: flex; align-items: center; justify-content: center; }
.pr-body { flex: 1; display: flex; min-height: 0; }
.pr-tabs { width: 22px; flex: none; margin-top: 1px; background: #1f1f1f; display: flex; flex-direction: column; align-items: center; padding-top: 6px; }
.pr-tab { width: 22px; height: 23.5px; flex: none; display: flex; align-items: center; justify-content: center; color: #d2d2d2; }
.pr-tab.gap { margin-top: 5.5px; }
.pr-tab.on { background: #2c2c2c; }
.blue { color: #6d93d8; }
.green { color: #3fa878; }
.pr-panel { flex: 1; padding: 6px 7px 6px 8px; }
.pr-title { display: flex; align-items: center; gap: 6px; height: 16px; margin-top: 1px; color: #d0d0d0; padding-left: 1px; }
.dim-ico { color: #6a6a6a; }
.add-mod { width: 184px; height: 17px; margin-top: 13px; padding: 0; border: 0; background: #545454; border-radius: 3px; display: flex; align-items: center; color: #d4d4d4; font: inherit; letter-spacing: inherit; position: relative; }
.add-plus { font-size: 13px; margin-left: 7px; color: #c8c8c8; }
.add-label { position: absolute; left: 14px; right: 0; text-align: center; }

.status { height: 15px; flex: none; background: #1a1a1a; display: flex; justify-content: space-between; align-items: center; padding: 0 9px 0 8px; color: #7a7a7a; font-size: 9.4px; }
</style>
